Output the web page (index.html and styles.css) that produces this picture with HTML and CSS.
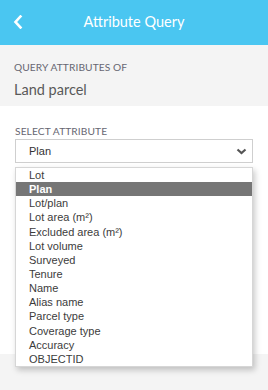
FILE: index.html
```html
<!DOCTYPE html>
<html lang="en">
<head>
  <meta charset="UTF-8">
  <meta name="viewport" content="width=device-width, initial-scale=1.0">
  <title>Attribute Query</title>
  <link rel="stylesheet" href="styles.css">
</head>
<body>
  <div class="header">
    <span class="back">
      <svg width="10" height="14" viewBox="0 0 10 14">
        <path d="M7.5 1.5 L2.5 7 L7.5 12.5" fill="none" stroke="#fff" stroke-width="2.6" stroke-linecap="square" stroke-linejoin="miter"/>
      </svg>
    </span>
    <h1>Attribute Query</h1>
  </div>

  <div class="info">
    <div class="label">QUERY ATTRIBUTES OF</div>
    <div class="layer">Land parcel</div>
  </div>

  <div class="form">
    <div class="label">SELECT ATTRIBUTE</div>
    <div class="select">
      <span>Plan</span>
      <svg class="caret" width="11" height="7" viewBox="0 0 11 7">
        <path d="M1.5 1.5 L5.5 5 L9.5 1.5" fill="none" stroke="#555" stroke-width="2.2"/>
      </svg>
    </div>

    <ul class="options">
      <li>Lot</li>
      <li class="selected">Plan</li>
      <li>Lot/plan</li>
      <li>Lot area (m²)</li>
      <li>Excluded area (m²)</li>
      <li>Lot volume</li>
      <li>Surveyed</li>
      <li>Tenure</li>
      <li>Name</li>
      <li>Alias name</li>
      <li>Parcel type</li>
      <li>Coverage type</li>
      <li>Accuracy</li>
      <li>OBJECTID</li>
    </ul>
  </div>
</body>
</html>
```

FILE: styles.css
```css
body {
  margin: 0;
  padding: 0;
  width: 268px;
  height: 390px;
  overflow: hidden;
  position: relative;
  font-family: Lato, sans-serif;
  background-color: #f4f4f4;
  color: #555;
}

.header {
  height: 45px;
  background-color: #4ac6f1;
  display: flex;
  align-items: center;
  justify-content: center;
  position: relative;
}

.back {
  position: absolute;
  left: 13px;
  top: 15px;
  display: flex;
}

h1 {
  margin: 0 0 2px;
  font-size: 14.5px;
  font-weight: normal;
  color: #fff;
}

.label {
  font-size: 10.2px;
  color: #676772;
  letter-spacing: 0.1px;
  line-height: 12px;
}

.info {
  padding: 16px 14px 10px;
  height: 35px;
}

.layer {
  margin-top: 8px;
  font-size: 14.5px;
  color: #595959;
  line-height: 17px;
}

.form {
  background-color: #fff;
  height: 248px;
  padding: 19px 15px 0;
  box-sizing: border-box;
}

.select {
  margin-top: 2px;
  height: 24px;
  border: 1px solid #cfcfcf;
  box-sizing: border-box;
  display: flex;
  align-items: center;
  justify-content: space-between;
  padding: 0 5px 0 13px;
  font-family: "Liberation Sans", Arial, sans-serif;
  font-size: 11px;
  color: #333;
}

.options {
  position: absolute;
  top: 167px;
  left: 15px;
  width: 238px;
  margin: 0;
  padding: 0;
  list-style: none;
  background-color: #fff;
  border: 1px solid #d6d6d6;
  box-sizing: border-box;
  box-shadow: 2px 3px 6px rgba(0, 0, 0, 0.22);
  font-family: "Liberation Sans", Arial, sans-serif;
  font-size: 11px;
  color: #3c3c3c;
}

.options li {
  height: 14.15px;
  line-height: 14.15px;
  padding-left: 13px;
}

.options .selected {
  background-color: #767676;
  color: #fff;
  font-weight: bold;
}
```
